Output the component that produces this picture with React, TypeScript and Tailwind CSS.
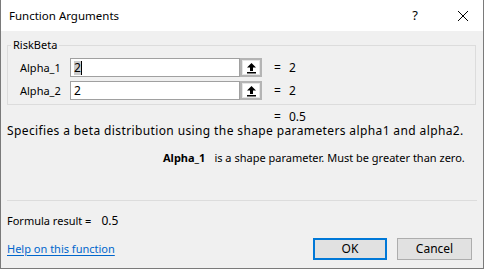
import React from 'react';

const font = { fontFamily: '"Noto Sans", "Open Sans", Arial, sans-serif' };

function RefButton() {
  return (
    <div className="w-[22px] h-[19px] border-2 border-[#b4b4b4] bg-[#e6e6e6] p-px flex">
      <div className="flex-1 bg-white flex items-center justify-center">
        <svg width="11" height="12" viewBox="0 0 11 12">
          <path d="M5.5 1 L10 5.5 L7 5.5 L7 9 L4 9 L4 5.5 L1 5.5 Z" fill="#000" />
          <rect x="1" y="10" width="9" height="1.5" fill="#000" />
        </svg>
      </div>
    </div>
  );
}

function ArgRow({ label, value, selected }: { label: string; value: string; selected?: boolean }) {
  return (
    <div className="flex items-center h-[19px] leading-[16px]">
      <div className="w-[62px] pl-[12px]">{label}</div>
      <div className="w-[170px] h-[19px] border border-[#a0a0a0] bg-white flex items-center pl-[3px] text-[12px]">
        {selected ? (
          <span className="flex items-center">
            <span className="bg-[#cccccc] leading-[14px]">{value}</span>
            <span className="w-px h-[14px] bg-black" />
          </span>
        ) : (
          <span>{value}</span>
        )}
      </div>
      <RefButton />
      <span className="ml-[12px] text-[12px]">=</span>
      <span className="ml-[8px] text-[12px]">{value}</span>
    </div>
  );
}

export default function App() {
  return (
    <div
      className="w-[484px] h-[269px] flex flex-col border-x border-b border-[#7a7a7a] bg-[#f0f0f0] text-[11px] text-black overflow-hidden"
      style={font}
    >
      <div className="h-[31px] shrink-0 bg-white flex items-center pl-[8px]">
        <span className="flex-1 text-[11.5px]">Function Arguments</span>
        <span className="w-[14px] text-center mr-[35px] text-[13px]">?</span>
        <svg className="mr-[14px]" width="12" height="12" viewBox="0 0 12 12">
          <path d="M1 1 L11 11 M11 1 L1 11" stroke="#000" strokeWidth="1" />
        </svg>
      </div>

      <div className="flex-1 flex flex-col px-[6px] whitespace-nowrap">
        <fieldset className="mt-[6px] border border-[#dcdcdc] pb-[4px] w-[469px]">
          <legend className="ml-[3px] px-[2px] leading-[16px]">RiskBeta</legend>
          <div className="flex flex-col gap-[4px] pt-[5px]">
            <ArgRow label="Alpha_1" value="2" selected />
            <ArgRow label="Alpha_2" value="2" />
          </div>
        </fieldset>

        <div className="flex h-[12px] leading-[12px] mt-[6px] items-center text-[12px]">
          <span className="ml-[267px]">=</span>
          <span className="ml-[8px]">0.5</span>
        </div>

        <div className="h-[14px] leading-[14px] mt-[1px] flex items-center text-[12px] tracking-[0.38px]">
          Specifies a beta distribution using the shape parameters alpha1 and alpha2.
        </div>

        <div className="h-[14px] leading-[14px] mt-[13px] flex items-center pl-[156px]">
          <span className="font-bold">Alpha_1</span>
          <span className="ml-[9px]">is a shape parameter. Must be greater than zero.</span>
        </div>

        <div className="mt-[35px] h-px bg-[#dcdcdc] w-[470px]" />

        <div className="h-[16px] leading-[16px] mt-[12px] flex items-center">
          <span>Formula result =</span>
          <span className="ml-[10px] text-[12px]">0.5</span>
        </div>

        <div className="mt-[9px] flex items-center">
          <a href="#" className="flex-1 text-[#0066cc] underline underline-offset-2">
            Help on this function
          </a>
          <button className="w-[74px] h-[22px] border-2 border-[#0078d7] bg-[#e1e1e1] text-[12px]">OK</button>
          <button className="w-[75px] h-[22px] ml-[10px] mr-[5px] border border-[#adadad] bg-[#e1e1e1] text-[12px]">
            Cancel
          </button>
        </div>
      </div>
    </div>
  );
}
